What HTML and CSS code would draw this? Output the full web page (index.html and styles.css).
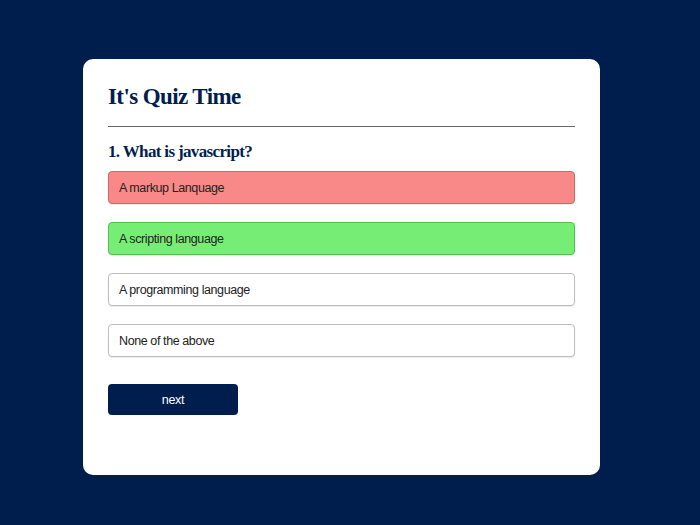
FILE: index.html
```html
<!DOCTYPE html>
<html>
<head>
<meta charset="utf-8">
<link rel="stylesheet" href="styles.css">
</head>
<body>
<div class="app">
  <h1 class="title">It's Quiz Time</h1>
  <div class="quiz">
    <h2 class="question">1. What is javascript?</h2>
    <div class="answers">
      <button class="btn wrong">A markup Lanquage</button>
      <button class="btn correct">A scripting language</button>
      <button class="btn">A programming language</button>
      <button class="btn">None of the above</button>
    </div>
    <button class="next">next</button>
  </div>
</div>
</body>
</html>
```
FILE: styles.css
```css
* { box-sizing: border-box; }
html, body { margin: 0; padding: 0; }
body {
  background: #001e4d;
  width: 700px;
  height: 525px;
  overflow: hidden;
  padding-top: 59px;
  padding-left: 83px;
}
.app {
  background: #fff;
  width: 517px;
  height: 416px;
  border-radius: 10px;
  padding: 24px 25px 0 25px;
}
.title {
  margin: 0;
  font-family: "Liberation Serif", "Times New Roman", serif;
  font-size: 23px;
  letter-spacing: -0.6px;
  line-height: 28px;
  font-weight: bold;
  color: #001e4d;
  padding-bottom: 15px;
  border-bottom: 1px solid #666;
}
.question {
  margin: 14px 0 0 0;
  font-family: "Liberation Serif", "Times New Roman", serif;
  font-size: 17px;
  letter-spacing: -0.65px;
  line-height: 22px;
  font-weight: bold;
  color: #001e4d;
}
.answers {
  margin-top: 8px;
  display: flex;
  flex-direction: column;
  gap: 18px;
}
.btn {
  display: block;
  width: 100%;
  height: 33px;
  text-align: left;
  padding: 0 10px;
  background: #fff;
  border: 1px solid #bdbdbd;
  border-radius: 4px;
  font-family: "Liberation Sans", Arial, sans-serif;
  font-size: 12.5px;
  letter-spacing: -0.4px;
  color: #222;
  box-shadow: 0 1px 1px rgba(0,0,0,0.08);
}
.btn.wrong {
  background: #f98888;
  border-color: #d06868;
}
.btn.correct {
  background: #76ee76;
  border-color: #52c152;
}
.next {
  display: block;
  margin-top: 27px;
  width: 130px;
  height: 31px;
  background: #001e4d;
  color: #fff;
  border: none;
  border-radius: 4px;
  font-family: "Liberation Sans", Arial, sans-serif;
  font-size: 12.5px;
  letter-spacing: -0.3px;
}
```
